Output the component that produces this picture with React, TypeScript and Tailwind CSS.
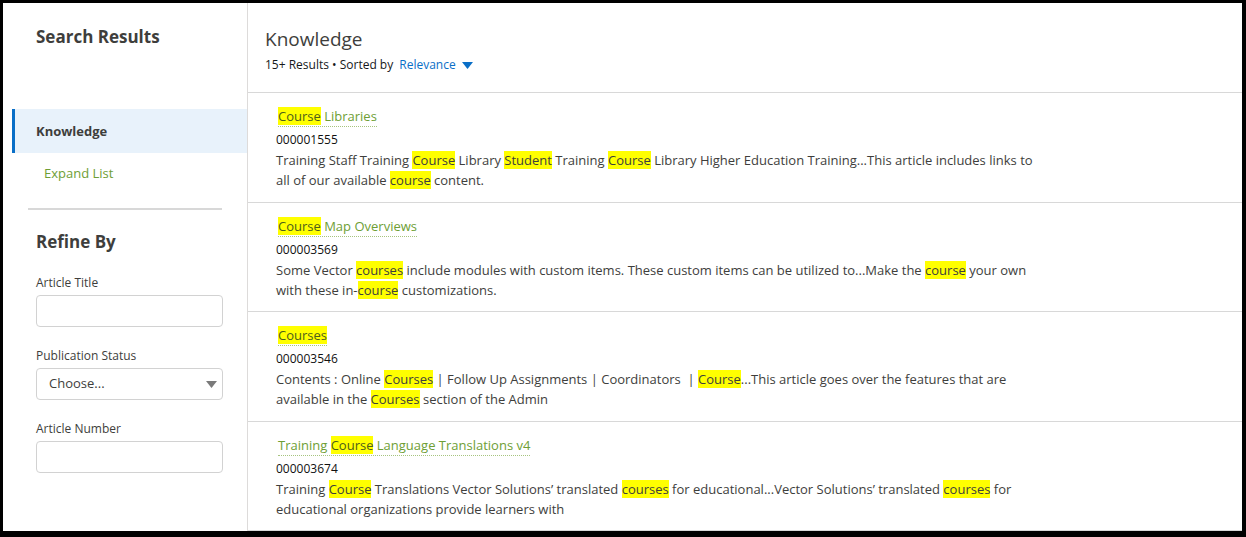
const font = { fontFamily: '"Open Sans", "Liberation Sans", sans-serif' };

type Part = string | { hl: string };

type Result = {
  title: Part[];
  number: string;
  lines: Part[][];
};

const results: Result[] = [
  {
    title: [{ hl: "Course" }, " Libraries"],
    number: "000001555",
    lines: [
      ["Training Staff Training ", { hl: "Course" }, " Library ", { hl: "Student" }, " Training ", { hl: "Course" }, " Library Higher Education Training...This article includes links to"],
      ["all of our available ", { hl: "course" }, " content."],
    ],
  },
  {
    title: [{ hl: "Course" }, " Map Overviews"],
    number: "000003569",
    lines: [
      ["Some Vector ", { hl: "courses" }, " include modules with custom items. These custom items can be utilized to...Make the ", { hl: "course" }, " your own"],
      ["with these in-", { hl: "course" }, " customizations."],
    ],
  },
  {
    title: [{ hl: "Courses" }],
    number: "000003546",
    lines: [
      ["Contents : Online ", { hl: "Courses" }, " | Follow Up Assignments | Coordinators \u00a0| ", { hl: "Course" }, "...This article goes over the features that are"],
      ["available in the ", { hl: "Courses" }, " section of the Admin"],
    ],
  },
  {
    title: ["Training ", { hl: "Course" }, " Language Translations v4"],
    number: "000003674",
    lines: [
      ["Training ", { hl: "Course" }, " Translations Vector Solutions\u2019 translated ", { hl: "courses" }, " for educational...Vector Solutions\u2019 translated ", { hl: "courses" }, " for"],
      ["educational organizations provide learners with"],
    ],
  },
];

function Parts({ parts, hlClass }: { parts: Part[]; hlClass: string }) {
  return (
    <>
      {parts.map((p, i) =>
        typeof p === "string" ? (
          <span key={i}>{p}</span>
        ) : (
          <span key={i} className={`bg-[#ffff00] ${hlClass}`}>
            {p.hl}
          </span>
        )
      )}
    </>
  );
}

function Caret({ className }: { className: string }) {
  return (
    <svg width="11" height="7" viewBox="0 0 11 7" className={className}>
      <path d="M0 0 H11 L5.5 7 Z" fill="currentColor" />
    </svg>
  );
}

function Field({ label, children }: { label: string; children: React.ReactNode }) {
  return (
    <div>
      <div className="text-[12px] leading-[16px] text-[#3e3e3c]">{label}</div>
      <div className="mt-[4px]">{children}</div>
    </div>
  );
}

export default function App() {
  return (
    <div
      className="w-[1246px] h-[537px] bg-black pt-[3px] pl-[3px] pr-[4px] pb-[6px] overflow-hidden"
      style={font}
    >
      <div className="flex h-full bg-white">
        {/* Sidebar */}
        <aside className="w-[245px] shrink-0 border-r border-[#dddbda]">
          <h1 className="pl-[33px] pt-[22px] text-[17px] leading-[23px] font-bold text-[#3e3e3c]">
            Search Results
          </h1>

          <div className="mt-[61px] ml-[9px] h-[44px] flex items-center bg-[#e8f2fb] border-l-[3px] border-[#0a6fc7] pl-[21px] pt-[2px]">
            <span className="text-[13px] font-bold text-[#3e3e3c]">Knowledge</span>
          </div>
          <div className="h-[40px] flex items-center pl-[41px] pt-[2px] text-[13px] text-[#6e9e35]">
            Expand List
          </div>

          <div className="mx-[25px] mt-[15px] h-[2px] bg-[#d8d8d8]" />

          <h2 className="pl-[33px] pt-[20px] text-[17px] leading-[23px] font-bold text-[#3e3e3c]">
            Refine By
          </h2>

          <div className="pl-[33px] pr-[24px] mt-[22px] flex flex-col gap-[21px]">
            <Field label="Article Title">
              <div className="h-[32px] rounded-[4px] border border-[#d2d2d2] bg-white" />
            </Field>
            <Field label="Publication Status">
              <div className="h-[32px] rounded-[4px] border border-[#d2d2d2] bg-white flex items-center justify-between pl-[12px] pr-[5px]">
                <span className="text-[13px] text-[#3e3e3c]">Choose...</span>
                <Caret className="text-[#7a7a7a]" />
              </div>
            </Field>
            <Field label="Article Number">
              <div className="h-[32px] rounded-[4px] border border-[#d2d2d2] bg-white" />
            </Field>
          </div>
        </aside>

        {/* Main */}
        <main className="flex-1 min-w-0">
          <div className="h-[90px] border-b border-[#d8d8d8] pl-[17px] pt-[24px]">
            <h2 className="text-[19px] leading-[24px] text-[#3e3e3c]">Knowledge</h2>
            <div className="mt-[4px] flex items-center text-[12px] leading-[20px] text-[#16181a]">
              <span>15+ Results • Sorted by</span>
              <span className="ml-[6px] text-[#0a6fc7]">Relevance</span>
              <Caret className="ml-[6px] text-[#0a6fc7]" />
            </div>
          </div>

          {results.map((r) => (
            <div key={r.number} className="border-b border-[#d8d8d8] pl-[28px] pt-[13px] pb-[11.5px]">
              <div className="text-[13px] leading-[20px]">
                <span className="ml-[2px] text-[#6e9e35] border-b border-dotted border-[#a7c47f] pb-[1px]">
                  <Parts parts={r.title} hlClass="text-[#4d5e1c]" />
                </span>
              </div>
              <div className="mt-[4px] text-[12px] leading-[20px] text-[#111]">{r.number}</div>
              <div className="text-[13px] leading-[20px] text-[#3e3e3c] whitespace-nowrap">
                {r.lines.map((line, i) => (
                  <div key={i}>
                    <Parts parts={line} hlClass="" />
                  </div>
                ))}
              </div>
            </div>
          ))}
        </main>
      </div>
    </div>
  );
}
